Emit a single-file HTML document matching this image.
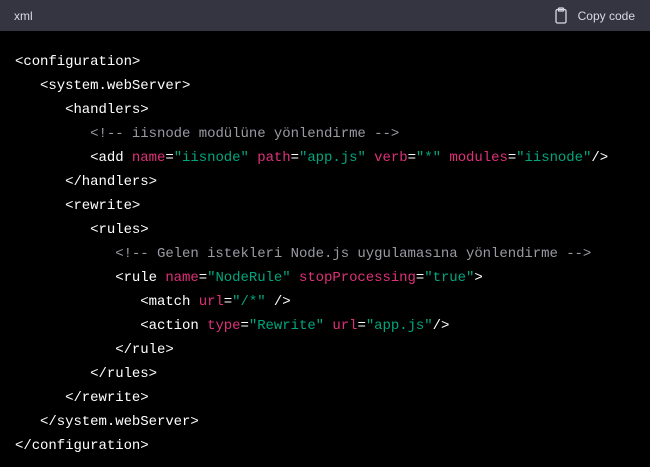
<!DOCTYPE html>
<html><head><style>
html,body{margin:0;padding:0;background:#000;width:650px;height:467px;overflow:hidden}
.h{height:31px;background:#343541;color:#d9d9e3;font:12px "Liberation Sans",sans-serif;position:relative}
.h .l{position:absolute;left:14px;top:9px}
.h .r{position:absolute;right:15px;top:9px}
.h svg{position:absolute;right:83px;top:7px}
pre{margin:0;padding:19px 15px 0;font:14px/24px "Liberation Mono",monospace;color:#fff;letter-spacing:-0.05px}
.a{color:#df3079}.s{color:#00a67d}.c{color:#9a9aa3}
</style></head><body>
<div class="h"><span class="l">xml</span>
<svg width="12" height="17" viewBox="0 0 12 17" fill="none" stroke="#d9d9e3" stroke-width="1.3"><rect x="1" y="2.5" width="10" height="13.5" rx="1.5"/><rect x="3.5" y="1" width="5" height="3" rx="0.8"/></svg>
<span class="r">Copy code</span></div>
<pre>&lt;configuration&gt;
   &lt;system.webServer&gt;
      &lt;handlers&gt;
         <span class="c">&lt;!-- iisnode modülüne yönlendirme --&gt;</span>
         &lt;add <span class="a">name</span>=<span class="s">"iisnode"</span> <span class="a">path</span>=<span class="s">"app.js"</span> <span class="a">verb</span>=<span class="s">"*"</span> <span class="a">modules</span>=<span class="s">"iisnode"</span>/&gt;
      &lt;/handlers&gt;
      &lt;rewrite&gt;
         &lt;rules&gt;
            <span class="c">&lt;!-- Gelen istekleri Node.js uygulamasına yönlendirme --&gt;</span>
            &lt;rule <span class="a">name</span>=<span class="s">"NodeRule"</span> <span class="a">stopProcessing</span>=<span class="s">"true"</span>&gt;
               &lt;match <span class="a">url</span>=<span class="s">"/*"</span> /&gt;
               &lt;action <span class="a">type</span>=<span class="s">"Rewrite"</span> <span class="a">url</span>=<span class="s">"app.js"</span>/&gt;
            &lt;/rule&gt;
         &lt;/rules&gt;
      &lt;/rewrite&gt;
   &lt;/system.webServer&gt;
&lt;/configuration&gt;</pre>
</body></html>
